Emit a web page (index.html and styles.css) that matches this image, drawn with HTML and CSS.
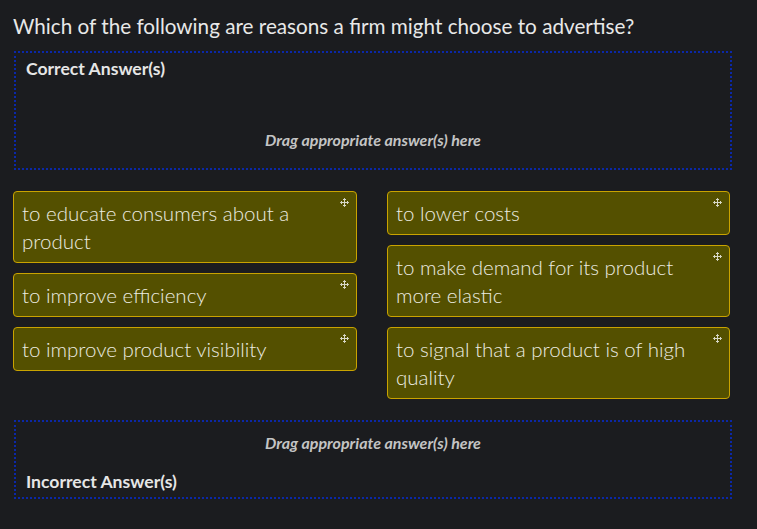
FILE: index.html
```html
<!DOCTYPE html>
<html lang="en">
<head>
<meta charset="UTF-8">
<meta name="viewport" content="width=device-width, initial-scale=1.0">
<title>Drag and Drop Question</title>
<link rel="stylesheet" href="styles.css">
</head>
<body>
    <div class="question">
        <h1 class="prompt">Which of the following are reasons a firm might choose to advertise?</h1>

        <div class="dropzone correct">
            <div class="zone-label">Correct Answer(s)</div>
            <div class="zone-hint">Drag appropriate answer(s) here</div>
        </div>

        <div class="choices">
            <div class="column">
                <div class="choice">to educate consumers about a product<span class="grip"></span></div>
                <div class="choice">to improve efficiency<span class="grip"></span></div>
                <div class="choice">to improve product visibility<span class="grip"></span></div>
            </div>
            <div class="column">
                <div class="choice">to lower costs<span class="grip"></span></div>
                <div class="choice">to make demand for its product more elastic<span class="grip"></span></div>
                <div class="choice">to signal that a product is of high quality<span class="grip"></span></div>
            </div>
        </div>

        <div class="dropzone incorrect">
            <div class="zone-hint">Drag appropriate answer(s) here</div>
            <div class="zone-label">Incorrect Answer(s)</div>
        </div>
    </div>

<script>
    // same little move icon in every card
    const gripSvg = '<svg width="9" height="9" viewBox="0 0 9 9" fill="none" stroke="#d8d8c8" stroke-width="1">' +
        '<path d="M4.5 0.5v8M0.5 4.5h8"/>' +
        '<path d="M3 2l1.5-1.5L6 2M3 7l1.5 1.5L6 7M2 3L0.5 4.5 2 6M7 3l1.5 1.5L7 6"/>' +
        '</svg>';
    document.querySelectorAll('.grip').forEach(g => g.innerHTML = gripSvg);
</script>
</body>
</html>
```

FILE: styles.css
```css
body {
    margin: 0;
    padding: 0;
    background: #1b1c1f;
    font-family: 'Lato', 'Open Sans', sans-serif;
    color: #e6e6e6;
}
.question {
    padding: 11px 25px 0 13px;
}
.prompt {
    margin: 0 0 10px;
    font-size: 20.7px;
    font-weight: 400;
    line-height: 30px;
    color: #e8e8e8;
}
.dropzone {
    box-sizing: border-box;
    margin-left: 1px;
    border: 2px dotted #0b28a8;
    padding: 0 10px;
    display: flex;
    flex-direction: column;
    justify-content: space-between;
}
.dropzone.correct {
    height: 119px;
    padding-top: 6px;
    padding-bottom: 18px;
}
.dropzone.incorrect {
    margin-top: 21px;
    height: 79px;
    padding-top: 11px;
    padding-bottom: 5px;
}
.zone-label {
    font-size: 17.6px;
    line-height: 20px;
    font-weight: bold;
    color: #e6e6e6;
}
.zone-hint {
    text-align: center;
    font-size: 16px;
    line-height: 20px;
    font-weight: bold;
    font-style: italic;
    color: #c4c4c4;
}
.choices {
    display: grid;
    grid-template-columns: 344px 343px;
    column-gap: 30px;
    margin-top: 21px;
}
.column {
    display: flex;
    flex-direction: column;
    gap: 10px;
}
.choice {
    position: relative;
    background: #545000;
    border: 1px solid #c9a300;
    border-radius: 4px;
    padding: 7px 28px 7px 8px;
    font-size: 20.5px;
    font-weight: 300;
    line-height: 28px;
    color: #ecece0;
}
.grip {
    position: absolute;
    top: 6px;
    right: 7px;
    width: 9px;
    height: 9px;
    line-height: 0;
}
```
